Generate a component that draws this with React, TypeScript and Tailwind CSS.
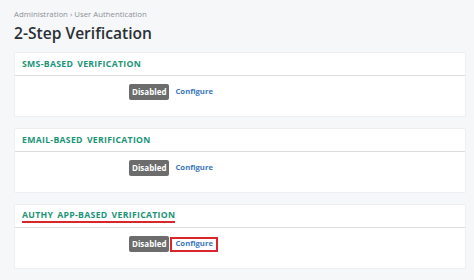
import React from "react";

function Section({ title, highlight }: { title: string; highlight?: boolean }) {
  return (
    <div className="bg-white border border-[#eeeff2] rounded-[2px]">
      <div className="h-[23px] flex items-center pl-[7px] border-b border-[#dcdde0]">
        <span
          className={
            "text-[8.7px] font-bold tracking-[0.3px] [word-spacing:1.5px] text-[#1b9478] leading-none " +
            (highlight ? "border-b-2 border-[#d9252b] pb-[2px] pt-[2px]" : "")
          }
        >
          {title}
        </span>
      </div>
      <div className="h-[40px] flex items-start pt-[8px] pl-[114px] gap-[1px]">
        <span className="h-[16px] px-[3px] flex items-center bg-[#6c6c6c] rounded-[2px] text-white text-[8px] font-bold leading-none">
          Disabled
        </span>
        <span
          className={
            "h-[15px] mt-[0.5px] flex items-center px-[3px] text-[7.7px] font-bold text-[#3a78c0] leading-none " +
            (highlight ? "border-2 border-[#d9252b]" : "border-2 border-transparent")
          }
        >
          Configure
        </span>
      </div>
    </div>
  );
}

export default function App() {
  return (
    <div
      className="w-[474px] h-[280px] bg-[#f6f7f9] overflow-hidden"
      style={{ fontFamily: '"Open Sans", "Noto Sans", sans-serif' }}
    >
      <div className="pl-[14px] pr-[8px] pt-[9px]">
        <div className="text-[7.8px] text-[#8d9096] leading-none h-[12px] flex items-center">
          Administration › User Authentication
        </div>
        <div className="text-[15.6px] font-semibold text-[#2b3036] leading-none mt-[3px] h-[20px] flex items-center">
          2-Step Verification
        </div>
        <div className="mt-[8px] flex flex-col gap-[11px]">
          <Section title="SMS-BASED VERIFICATION" />
          <Section title="EMAIL-BASED VERIFICATION" />
          <Section title="AUTHY APP-BASED VERIFICATION" highlight />
        </div>
      </div>
    </div>
  );
}
